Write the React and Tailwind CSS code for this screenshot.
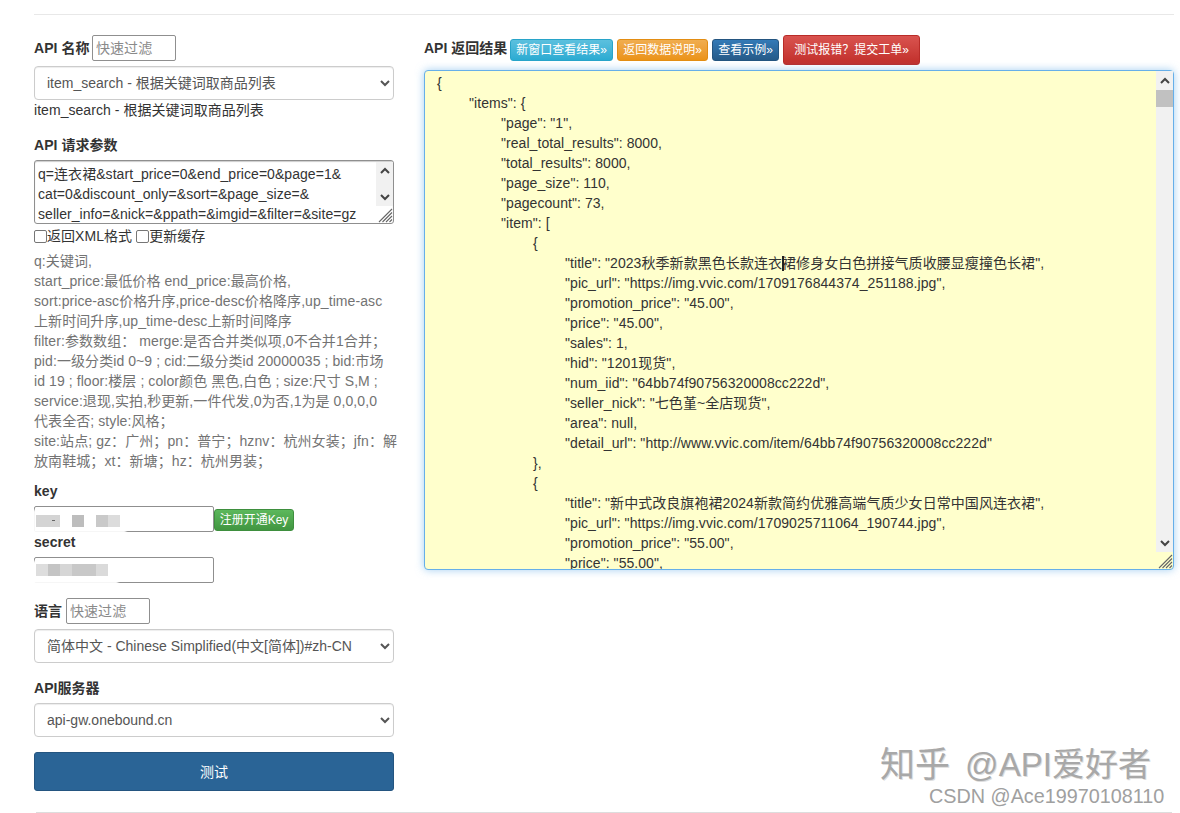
import React from 'react';

const FONT = "font-['Liberation_Sans','Noto_Sans_CJK_SC',sans-serif]";

const RESULT = `{
	"items": {
		"page": "1",
		"real_total_results": 8000,
		"total_results": 8000,
		"page_size": 110,
		"pagecount": 73,
		"item": [
			{
				"title": "2023秋季新款黑色长款连衣裙修身女白色拼接气质收腰显瘦撞色长裙",
				"pic_url": "https://img.vvic.com/1709176844374_251188.jpg",
				"promotion_price": "45.00",
				"price": "45.00",
				"sales": 1,
				"hid": "1201现货",
				"num_iid": "64bb74f90756320008cc222d",
				"seller_nick": "七色堇~全店现货",
				"area": null,
				"detail_url": "http://www.vvic.com/item/64bb74f90756320008cc222d"
			},
			{
				"title": "新中式改良旗袍裙2024新款简约优雅高端气质少女日常中国风连衣裙",
				"pic_url": "https://img.vvic.com/1709025711064_190744.jpg",
				"promotion_price": "55.00",
				"price": "55.00",
				"sales": 0,
				"hid": "A2-25"
			}
		]
	}
}`;

const PARAMS =
  'q=连衣裙&start_price=0&end_price=0&page=1&\ncat=0&discount_only=&sort=&page_size=&\nseller_info=&nick=&ppath=&imgid=&filter=&site=gz';

const HELP = [
  'q:关键词,',
  'start_price:最低价格 end_price:最高价格,',
  'sort:price-asc价格升序,price-desc价格降序,up_time-asc',
  '上新时间升序,up_time-desc上新时间降序',
  'filter:参数数组： merge:是否合并类似项,0不合并1合并；',
  'pid:一级分类id 0~9 ; cid:二级分类id 20000035 ; bid:市场',
  'id 19 ; floor:楼层 ; color颜色 黑色,白色 ; size:尺寸 S,M ;',
  'service:退现,实拍,秒更新,一件代发,0为否,1为是 0,0,0,0',
  '代表全否; style:风格；',
  'site:站点; gz：广州；pn：普宁；hznv：杭州女装；jfn：解',
  '放南鞋城；xt：新塘；hz：杭州男装；',
];

const FilterInput = () => (
  <input
    placeholder="快速过滤"
    className="w-[84px] h-[26px] border border-[#8f8f8f] rounded-[2px] px-[3px] text-sm text-[#333] placeholder:text-[#8a8a8a] bg-white outline-none"
  />
);

const Select = ({ value }) => (
  <select
    defaultValue={value}
    className="block w-full h-[34px] border border-[#ccc] rounded bg-white px-2 text-sm tracking-normal text-[#555] shadow-[inset_0_1px_1px_rgba(0,0,0,0.075)] outline-none"
  >
    <option>{value}</option>
  </select>
);

const ChevronUp = () => (
  <svg width="10" height="7" viewBox="0 0 10 7" fill="none" stroke="#444" strokeWidth="2">
    <path d="M1 6l4-4 4 4" />
  </svg>
);

const ChevronDown = () => (
  <svg width="10" height="7" viewBox="0 0 10 7" fill="none" stroke="#444" strokeWidth="2">
    <path d="M1 1l4 4 4-4" />
  </svg>
);

const Grip = () => (
  <svg width="15" height="15" viewBox="0 0 15 15" fill="none" stroke="#666" strokeWidth="1.1">
    <path d="M14 1L1 14M14 4.5L4.5 14M14 8L8 14M14 11.5L11.5 14" />
  </svg>
);

// 打码的灰块
const Blur = ({ className }) => <span className={`absolute h-3 ${className}`} />;

const App = () => {
  return (
    <div className={`${FONT} w-[1180px] h-[813px] overflow-hidden bg-white text-sm leading-5 tracking-[0.05px] text-[#333]`}>
      <div className="pl-[34px] pr-[6px] pt-[14px]">
        <hr className="border-0 border-t border-[#e8e8e8]" />
        <div className="flex gap-[30px] mt-5">
          <div className="w-[360px] shrink-0">
            <div className="flex items-center gap-[3px]">
              <b className="w-[55px] font-bold whitespace-nowrap">API 名称</b>
              <FilterInput />
            </div>
            <div className="mt-[5px]">
              <Select value="item_search - 根据关键词取商品列表" />
            </div>
            <div className="h-5">item_search - 根据关键词取商品列表</div>

            <div className="mt-[15px] font-bold">API 请求参数</div>
            <div className="relative mt-[5px]">
              <textarea
                readOnly
                value={PARAMS}
                className="block w-full h-[64px] border border-[#8f8f8f] rounded-[3px] px-[3px] pt-[3px] text-sm leading-5 text-[#333] bg-white outline-none resize-none overflow-hidden shadow-[inset_0_1px_1px_rgba(0,0,0,0.2)]"
              />
              <div className="absolute right-[1px] top-[2px] w-[17px] h-[44px] bg-[#f1f1f1] flex flex-col items-center justify-between py-[5px]">
                <ChevronUp />
                <ChevronDown />
              </div>
              <div className="absolute right-[1px] bottom-[1px] w-[15px] h-[15px]">
                <Grip />
              </div>
            </div>
            <div className="flex items-center h-5 mt-[2px] text-[#333]">
              <span className="w-[13px] h-[13px] border border-[#767676] rounded-[2px] bg-white" />
              <span>返回XML格式</span>
              <span className="w-[13px] h-[13px] ml-1 border border-[#767676] rounded-[2px] bg-white" />
              <span>更新缓存</span>
            </div>

            <div className="mt-[5px] text-[#737373] tracking-[0.08px] whitespace-nowrap">
              {HELP.map((line) => (
                <div key={line} className="h-5">{line}</div>
              ))}
            </div>

            <div className="mt-[10px] font-bold">key</div>
            <div className="flex items-end mt-[5px]">
              <div className="relative w-[180px] h-[26px]">
                <input className="block w-full h-full border border-[#8f8f8f] rounded-[2px] bg-white outline-none" />
                <span className="absolute left-[-1px] top-[4px] w-[93px] h-[23px] bg-white blur-[1px]" />
                <Blur className="left-[2px] top-[9px] w-6 bg-[#d4d4d4]" />
                <Blur className="left-[18px] top-[14px] !h-px w-[3px] bg-[#666]" />
                <Blur className="left-[38px] top-[9px] w-3 bg-[#bdbdbd]" />
                <Blur className="left-[62px] top-[9px] w-3 bg-[#c9c9c9]" />
                <Blur className="left-[74px] top-[9px] w-3 bg-[#dcdcdc]" />
              </div>
              <button className="h-[22px] w-[80px] mb-px rounded-[3px] border border-[#3e8f3e] bg-gradient-to-b from-[#5cb85c] to-[#419641] text-xs tracking-normal text-white">
                注册开通Key
              </button>
            </div>
            <div className="font-bold h-[25px]">secret</div>
            <div className="relative w-[180px] h-[26px]">
              <input className="block w-full h-full border border-[#8f8f8f] rounded-[2px] bg-white outline-none" />
              <span className="absolute left-[-8px] top-[4px] w-[92px] h-[23px] bg-white blur-[1px]" />
              <Blur className="left-[2px] top-[7px] w-3 bg-[#dddddd]" />
              <Blur className="left-[14px] top-[7px] w-3 bg-[#c4c4c4]" />
              <Blur className="left-[26px] top-[7px] w-3 bg-[#d6d6d6]" />
              <Blur className="left-[38px] top-[7px] w-6 bg-[#c8c8c8]" />
              <Blur className="left-[62px] top-[7px] w-3 bg-[#dadada]" />
            </div>

            <div className="flex items-center gap-[3px] mt-[15px]">
              <b className="w-[29px] font-bold whitespace-nowrap">语言</b>
              <FilterInput />
            </div>
            <div className="mt-[5px]">
              <Select value="简体中文 - Chinese Simplified(中文[简体])#zh-CN" />
            </div>

            <div className="mt-[15px] font-bold">API服务器</div>
            <div className="mt-[5px]">
              <Select value="api-gw.onebound.cn" />
            </div>

            <button className="block w-full h-[39px] mt-[15px] rounded-[3px] border border-[#245580] bg-[#2a6496] text-white text-sm">
              测试
            </button>
          </div>

          <div className="w-[750px] shrink-0">
            <div className="flex items-center gap-1 h-[30px] text-xs tracking-normal text-center text-white">
              <b className="w-[82px] self-start pt-[3px] text-sm text-left font-bold text-[#333] whitespace-nowrap">API 返回结果</b>
              <a className="w-[103px] h-[22px] rounded-[3px] border border-[#28a4c9] bg-gradient-to-b from-[#5bc0de] to-[#2aabd2] leading-5">新窗口查看结果»</a>
              <a className="w-[91px] h-[22px] rounded-[3px] border border-[#e38d13] bg-gradient-to-b from-[#f0ad4e] to-[#eb9316] leading-5">返回数据说明»</a>
              <a className="w-[67px] h-[22px] rounded-[3px] border border-[#245580] bg-gradient-to-b from-[#337ab7] to-[#265a88] leading-5">查看示例»</a>
              <a className="w-[137px] h-[30px] rounded-[3px] border border-[#b92c28] bg-gradient-to-b from-[#d9534f] to-[#c12e2a] leading-7">测试报错？提交工单»</a>
            </div>
            <div className="relative mt-[5px]">
              <textarea
                readOnly
                value={RESULT}
                wrap="off"
                className="block w-full h-[500px] border border-[#66afe9] rounded bg-[#ffffcc] pl-3 pr-3 pt-[2px] text-sm leading-5 tracking-[0.06px] text-[#333] outline-none resize-none overflow-hidden whitespace-pre [tab-size:32px] shadow-[0_0_8px_rgba(102,175,233,0.6)]"
              />
              <span className="absolute left-[358px] top-[186px] w-[2px] h-[15px] bg-[#222]" />
              <div className="absolute right-[1px] top-[1px] w-[17px] h-[481px] bg-[#f1f1f1] flex flex-col items-center">
                <div className="h-[19px] flex items-center justify-center">
                  <ChevronUp />
                </div>
                <div className="w-full h-[17px] bg-[#c1c1c1]" />
                <div className="mt-auto h-[18px] flex items-center justify-center">
                  <ChevronDown />
                </div>
              </div>
              <div className="absolute right-[1px] bottom-[1px] w-[15px] h-[15px]">
                <Grip />
              </div>
            </div>
          </div>
        </div>
        <hr className="border-0 border-t border-[#ddd] mt-[21px] ml-[2px] mr-[2px]" />
      </div>

      <div className="absolute left-[880px] top-[742px] flex items-center leading-[46px] text-[#a8a8a8] whitespace-nowrap [text-shadow:1px_1px_0_#dddddd]">
        <span className="text-[35px]">知乎</span>
        <span className="ml-[15px] text-[33px]">@API爱好者</span>
      </div>
      <div className="absolute left-[929px] top-[784px] text-[19.8px] leading-6 tracking-normal text-[#a0a0a0] whitespace-nowrap">
        CSDN @Ace19970108110
      </div>
    </div>
  );
};

export default App;
